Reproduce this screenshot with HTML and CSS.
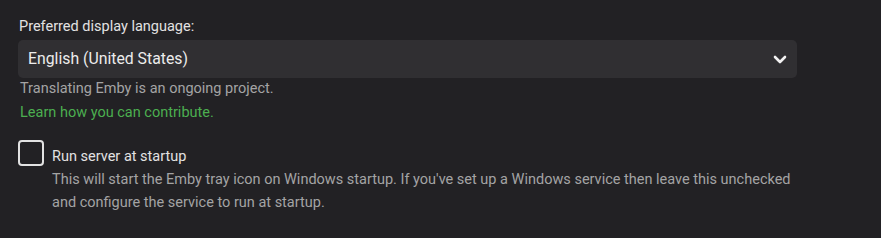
FILE: index.html
```html
<!DOCTYPE html>
<html lang="en">

<head>
    <meta charset="UTF-8">
    <title>Settings</title>
    <link rel="stylesheet" href="styles.css">
</head>

<body>
    <div class="page">
        <!-- Display language -->
        <div class="field">
            <label class="field-label" for="langSelect">Preferred display language:</label>
            <div class="select-wrap">
                <div class="select" id="langSelect">English (United States)</div>
                <svg class="chevron" width="14" height="10" viewBox="0 0 14 10">
                    <path d="M2 2 L7 7 L12 2" fill="none" stroke="#f2f2f2" stroke-width="2.6" stroke-linecap="round" stroke-linejoin="round" />
                </svg>
            </div>
            <div class="field-desc">Translating Emby is an ongoing project.</div>
            <a class="field-link" href="#">Learn how you can contribute.</a>
        </div>

        <!-- Startup checkbox -->
        <div class="check-row">
            <span class="checkbox"></span>
            <div class="check-text">
                <div class="check-title">Run server at startup</div>
                <div class="check-desc">This will start the Emby tray icon on Windows startup. If you've set up a Windows service then leave this unchecked
                    and configure the service to run at startup.</div>
            </div>
        </div>
    </div>
</body>

</html>
```

FILE: styles.css
```css
body {
    margin: 0;
    background-color: #222124;
    font-family: Roboto, "Liberation Sans", sans-serif;
    font-size: 14.5px;
    color: #e6e6e6;
}

.page {
    padding: 17px 18px 0 18px;
    width: 779px;
}

.field-label {
    display: block;
    color: #e2e2e2;
    line-height: 20px;
    margin-left: 1px;
    margin-bottom: 3px;
}

.select-wrap {
    position: relative;
}

.select {
    background-color: #302f32;
    border-radius: 5px;
    height: 38px;
    line-height: 38px;
    padding: 0 10px;
    font-size: 15.8px;
    color: #ececec;
}

.chevron {
    position: absolute;
    right: 10px;
    top: 15px;
}

.field-desc {
    color: #a4a4a4;
    line-height: 22px;
    margin-left: 2px;
}

.field-link {
    display: block;
    color: #4caf50;
    text-decoration: none;
    line-height: 22px;
    margin-top: 2px;
    margin-left: 2px;
}

.check-row {
    display: flex;
    margin-top: 15px;
}

.checkbox {
    flex: none;
    width: 22px;
    height: 22px;
    border: 2px solid #e2e2e2;
    border-radius: 4px;
    margin-top: 1px;
    margin-right: 8px;
}

.check-title {
    color: #e2e2e2;
    line-height: 22px;
    margin-top: 7px;
}

.check-desc {
    color: #a4a4a4;
    line-height: 23px;
}
```
